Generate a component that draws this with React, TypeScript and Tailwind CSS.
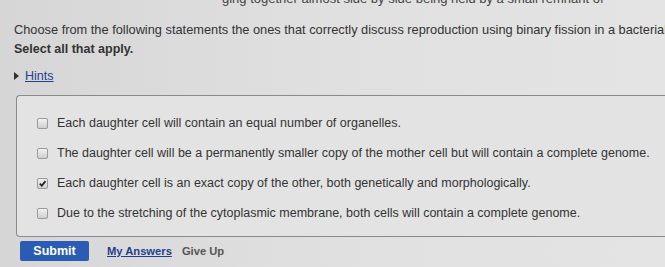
import React from "react";

const options = [
  { text: "Each daughter cell will contain an equal number of organelles.", checked: false },
  { text: "The daughter cell will be a permanently smaller copy of the mother cell but will contain a complete genome.", checked: false },
  { text: "Each daughter cell is an exact copy of the other, both genetically and morphologically.", checked: true },
  { text: "Due to the stretching of the cytoplasmic membrane, both cells will contain a complete genome.", checked: false },
];

function Box({ checked }: { checked: boolean }) {
  return (
    <span className="flex h-[11px] w-[11px] shrink-0 items-center justify-center rounded-[2px] border border-[#9a9a9a] bg-gradient-to-b from-[#f2f2f2] to-[#cfcfcf]">
      {checked && (
        <svg width="9" height="9" viewBox="0 0 10 10">
          <path d="M2 5.2 L4.2 7.5 L8.3 2.3" fill="none" stroke="#222" strokeWidth="2" />
        </svg>
      )}
    </span>
  );
}

export default function App() {
  return (
    <div
      className="relative h-[267px] w-[665px] overflow-hidden bg-gradient-to-r from-[#d6d6d6] via-[#e0e0e0] to-[#e4e4e4] text-[#333]"
      style={{ fontFamily: '"Liberation Sans", Arial, sans-serif' }}
    >
      <div className="-mt-[9px] whitespace-nowrap pl-[222px] text-[13px] leading-[15px] text-[#444]">
        ging together almost side by side being held by a small remnant of
      </div>
      <div className="mt-[16px] whitespace-nowrap pl-[14px] text-[12.8px] leading-[16px]">
        Choose from the following statements the ones that correctly discuss reproduction using binary fission in a bacterial cell.
      </div>
      <div className="mt-[3px] pl-[14px] text-[12.5px] font-bold leading-[16px]">Select all that apply.</div>
      <div className="mt-[11px] flex items-center gap-[6px] pl-[14px] text-[12.5px] leading-[16px]">
        <svg width="5" height="8" viewBox="0 0 5 8">
          <path d="M0 0 L5 4 L0 8 Z" fill="#333" />
        </svg>
        <span className="text-[#1f3f8f] underline">Hints</span>
      </div>
      <div className="ml-[16px] mt-[11px] h-[142px] rounded-tl-[4px] rounded-bl-[4px] border border-r-0 border-[#8a8a8a] bg-[#e3e3e3] pt-[20px]">
        <div className="flex flex-col gap-[15px] pl-[20px]">
          {options.map((o, i) => (
            <div key={i} className="flex items-center gap-[9px] whitespace-nowrap text-[12.5px] leading-[15px]">
              <Box checked={o.checked} />
              <span>{o.text}</span>
            </div>
          ))}
        </div>
      </div>
      <div className="mt-[4px] flex items-center pl-[20px]">
        <button className="h-[20px] w-[69px] rounded-[2px] bg-[#2b5cb5] text-[12.5px] font-bold text-white">
          Submit
        </button>
        <span className="ml-[18px] text-[11.2px] font-bold text-[#1f3f8f] underline">My Answers</span>
        <span className="ml-[10px] text-[11.2px] font-bold text-[#555]">Give Up</span>
      </div>
    </div>
  );
}
